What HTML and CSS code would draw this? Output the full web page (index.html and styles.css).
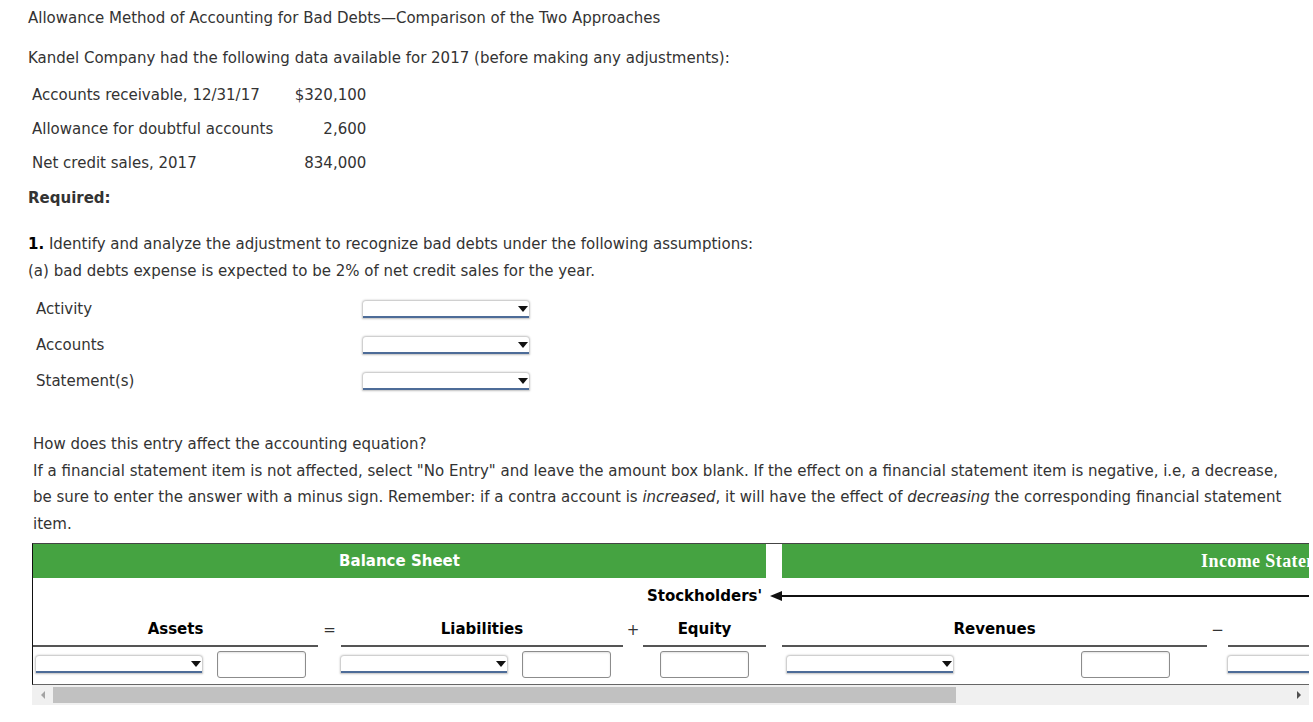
FILE: index.html
```html
<!DOCTYPE html>
<html lang="en">
<head>
    <meta charset="UTF-8">
    <meta name="viewport" content="width=device-width, initial-scale=1.0">
    <title>Allowance Method of Accounting for Bad Debts</title>
    <link rel="stylesheet" href="styles.css">
</head>
<body>
<main class="page">
    <p class="title">Allowance Method of Accounting for Bad Debts—Comparison of the Two Approaches</p>
    <p class="intro">Kandel Company had the following data available for 2017 (before making any adjustments):</p>

    <table class="data">
        <tr><td class="lbl">Accounts receivable, 12/31/17</td><td class="num">$320,100</td></tr>
        <tr><td class="lbl">Allowance for doubtful accounts</td><td class="num">2,600</td></tr>
        <tr><td class="lbl">Net credit sales, 2017</td><td class="num">834,000</td></tr>
    </table>

    <p class="req">Required:</p>
    <p class="task"><b>1.</b> Identify and analyze the adjustment to recognize bad debts under the following assumptions:<br>(a) bad debts expense is expected to be 2% of net credit sales for the year.</p>

    <div class="entry">
        <label>Activity</label>
        <span class="dd"><select><option></option></select></span>
        <label>Accounts</label>
        <span class="dd"><select><option></option></select></span>
        <label>Statement(s)</label>
        <span class="dd"><select><option></option></select></span>
    </div>

    <div class="effect">
        <p>How does this entry affect the accounting equation?<br>If a financial statement item is not affected, select "No Entry" and leave the amount box blank. If the effect on a financial statement item is negative, i.e, a decrease, be sure to enter the answer with a minus sign. Remember: if a contra account is <i>increased</i>, it will have the effect of <i>decreasing</i> the corresponding financial statement item.</p>
    </div>

    <div class="sheet-wrap">
        <div class="sheet-view">
            <table class="sheet">
                <colgroup>
                    <col style="width: 285px">
                    <col style="width: 23px">
                    <col style="width: 282px">
                    <col style="width: 20px">
                    <col style="width: 123px">
                    <col style="width: 16px">
                    <col style="width: 425px">
                    <col style="width: 21px">
                    <col style="width: 425px">
                    <col style="width: 21px">
                    <col style="width: 92px">
                </colgroup>
                <tr class="band">
                    <td colspan="5" class="bs">Balance Sheet</td>
                    <td class="gap"></td>
                    <td colspan="5" class="is">Income Statement</td>
                </tr>
                <tr class="sub">
                    <td colspan="4"></td>
                    <td class="hd-top">Stockholders'</td>
                    <td colspan="6" class="arrow-cell">
                        <div class="arrow"><span class="head"></span><span class="shaft"></span></div>
                    </td>
                </tr>
                <tr class="heads">
                    <td class="hd">Assets</td>
                    <td class="op">=</td>
                    <td class="hd">Liabilities</td>
                    <td class="op">+</td>
                    <td class="hd">Equity</td>
                    <td></td>
                    <td class="hd">Revenues</td>
                    <td class="op">−</td>
                    <td class="hd">Expenses</td>
                    <td class="op">=</td>
                    <td class="hd">Net Income</td>
                </tr>
                <tr class="inputs">
                    <td><div class="pair"><span class="dd"><select><option></option></select></span><input class="amt" type="text"></div></td>
                    <td></td>
                    <td><div class="pair flush"><span class="dd"><select><option></option></select></span><input class="amt" type="text"></div></td>
                    <td></td>
                    <td class="mid"><input class="amt" type="text"></td>
                    <td></td>
                    <td><div class="pair wide"><span class="dd"><select><option></option></select></span><input class="amt" type="text"></div></td>
                    <td></td>
                    <td><div class="pair flush wide"><span class="dd"><select><option></option></select></span><input class="amt" type="text"></div></td>
                    <td></td>
                    <td class="mid"><input class="amt" type="text"></td>
                </tr>
            </table>
        </div>
        <div class="hscroll">
            <span class="sbtn left"><i></i></span>
            <span class="strack"><span class="sthumb"></span></span>
            <span class="sbtn right"><i></i></span>
        </div>
    </div>
</main>
</body>
</html>
```

FILE: styles.css
```css
body {
    margin: 0;
    background: #fff;
}
p {
    margin: 0;
}
.page {
    padding: 5px 4px 0 28px;
    font: 15px/26px "DejaVu Sans", Verdana, sans-serif;
    color: #333;
}
.intro {
    margin-top: 14px;
}
.data {
    margin-top: 7px;
    border-collapse: collapse;
}
.data td {
    height: 34px;
    padding: 0 4px;
    white-space: nowrap;
}
.data .lbl {
    width: 240px;
}
.data .num {
    width: 85px;
    text-align: right;
}
.req {
    margin-top: 5px;
    font-weight: bold;
}
.task {
    margin-top: 20px;
    line-height: 27px;
}
.task b {
    color: #000;
}
.entry {
    display: grid;
    grid-template-columns: 327px 166px;
    grid-auto-rows: 36px;
    align-items: center;
    margin-top: 6px;
    padding-left: 8px;
}

/* dropdown with the little black triangle */
.dd {
    position: relative;
    display: inline-flex;
    width: 166px;
}
.dd select {
    appearance: none;
    -webkit-appearance: none;
    box-sizing: border-box;
    width: 166px;
    height: 17px;
    margin: 0;
    padding: 0 16px 0 4px;
    border: 0;
    border-bottom: 2px solid #4d6c98;
    border-radius: 3px 3px 0 0;
    background: #fff;
    box-shadow: 0 0 2px 1px rgba(0, 0, 0, 0.25);
    font: 13px "DejaVu Sans", Verdana, sans-serif;
}
.dd::after {
    content: "";
    position: absolute;
    right: 1px;
    top: 5px;
    border-left: 5px solid transparent;
    border-right: 5px solid transparent;
    border-top: 6px solid #111;
    pointer-events: none;
}

.effect {
    margin-top: 32px;
    padding: 0 18px 0 5px;
    line-height: 26.5px;
}

.sheet-wrap {
    width: 1277px;
    margin: 6px 0 0 4px;
}
.sheet-view {
    overflow: hidden;
}
.sheet {
    table-layout: fixed;
    width: 1734px;
    border-collapse: separate;
    border-spacing: 0;
    border-top: 1px solid #444;
    border-left: 1px solid #111;
    border-bottom: 1px solid #666;
    color: #000;
}
.sheet td {
    padding: 0;
    text-align: center;
    vertical-align: middle;
    white-space: nowrap;
}
.band {
    height: 34px;
}
.band .bs,
.band .is {
    background: #45a341;
    color: #fff;
    font-weight: bold;
}
.band .is {
    font: bold 18px "Liberation Serif", "Times New Roman", serif;
    letter-spacing: 0.4px;
}
.band .gap {
    background: #fff;
}
.sub {
    height: 34px;
}
.sub td {
    padding-top: 2px;
}
.hd-top,
.hd {
    font-weight: bold;
}
.sheet .arrow-cell {
    padding-left: 4px;
}
.arrow {
    display: flex;
    align-items: center;
}
.arrow .head {
    border-right: 12px solid #111;
    border-top: 5px solid transparent;
    border-bottom: 5px solid transparent;
}
.arrow .shaft {
    flex: 1;
    height: 2px;
    background: #111;
}
.heads {
    height: 35px;
}
.heads td {
    padding-top: 1px;
}
.heads .hd {
    border-bottom: 2px solid #555;
}
.heads .op {
    color: #333;
}
.inputs {
    height: 37px;
}
.sheet .inputs td {
    padding-bottom: 2px;
}
.pair {
    display: flex;
    align-items: center;
    gap: 15px;
    padding-left: 3px;
}
.pair.flush {
    padding-left: 0;
}
.pair.wide {
    gap: 128px;
    padding-left: 5px;
}
.pair.flush.wide {
    padding-left: 0;
}
.amt {
    box-sizing: border-box;
    width: 89px;
    height: 27px;
    margin: 0;
    border: 1px solid #8c8c8c;
    border-radius: 3px;
    box-shadow: inset 0 1px 2px rgba(0, 0, 0, 0.12);
    font: 13px "DejaVu Sans", Verdana, sans-serif;
}
.mid .amt {
    display: block;
    margin: 0 auto;
}

/* horizontal scroll bar under the sheet */
.hscroll {
    display: flex;
    height: 20px;
    background: #f0f0f0;
}
.sbtn {
    display: flex;
    align-items: center;
    justify-content: center;
    width: 21px;
}
.sbtn i {
    border-top: 4px solid transparent;
    border-bottom: 4px solid transparent;
}
.sbtn.left i {
    border-right: 4px solid #a3a3a3;
}
.sbtn.right i {
    border-left: 4px solid #505050;
}
.strack {
    flex: 1;
    padding: 2px 0;
}
.sthumb {
    display: block;
    width: 903px;
    height: 100%;
    background: #c1c1c1;
}
```
